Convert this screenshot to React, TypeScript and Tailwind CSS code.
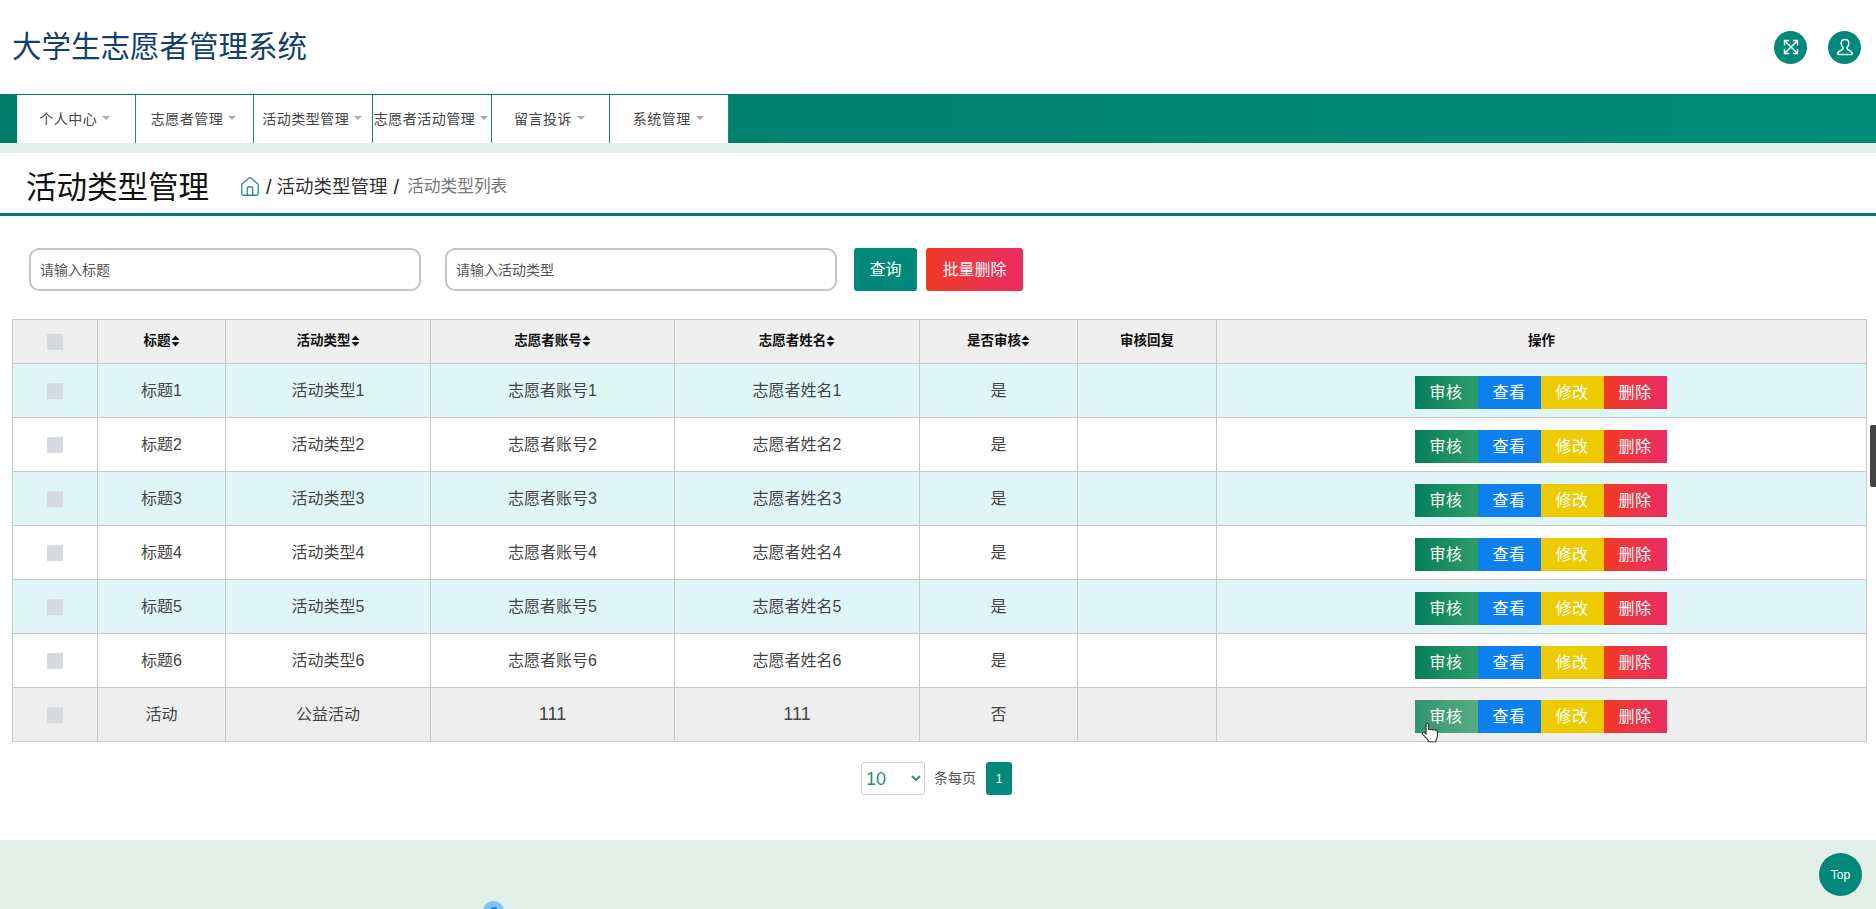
// 活动类型管理列表页
import { House } from 'lucide-react'

const navItems = ['个人中心', '志愿者管理', '活动类型管理', '志愿者活动管理', '留言投诉', '系统管理']

const columns = [
  { label: '标题', sort: true },
  { label: '活动类型', sort: true },
  { label: '志愿者账号', sort: true },
  { label: '志愿者姓名', sort: true },
  { label: '是否审核', sort: true },
  { label: '审核回复', sort: false },
  { label: '操作', sort: false },
]

const rows = [
  { title: '标题1', type: '活动类型1', account: '志愿者账号1', name: '志愿者姓名1', audit: '是', bg: 'bg-[#e0f6f6]' },
  { title: '标题2', type: '活动类型2', account: '志愿者账号2', name: '志愿者姓名2', audit: '是', bg: 'bg-white' },
  { title: '标题3', type: '活动类型3', account: '志愿者账号3', name: '志愿者姓名3', audit: '是', bg: 'bg-[#e0f6f6]' },
  { title: '标题4', type: '活动类型4', account: '志愿者账号4', name: '志愿者姓名4', audit: '是', bg: 'bg-white' },
  { title: '标题5', type: '活动类型5', account: '志愿者账号5', name: '志愿者姓名5', audit: '是', bg: 'bg-[#e0f6f6]' },
  { title: '标题6', type: '活动类型6', account: '志愿者账号6', name: '志愿者姓名6', audit: '是', bg: 'bg-white' },
  { title: '活动', type: '公益活动', account: '111', name: '111', audit: '否', bg: 'bg-[#eeeeee]', hover: true },
]

const cellClass = 'border border-[#c8c8c8] text-center align-middle'

function SortIcon() {
  return (
    <svg width="9" height="12" viewBox="0 0 9 12" className="inline-block align-[-2px]">
      <path d="M4.500 0.500 8.500 5.100H0.500Z" fill="#111" />
      <path d="M4.500 11.500 8.500 6.900H0.500Z" fill="#111" />
    </svg>
  )
}

function ExpandIcon() {
  return (
    <svg width="18" height="18" viewBox="0 0 20 20" fill="none" stroke="white" strokeWidth="1.600">
      <path d="M3 3 17 17M17 3 3 17" />
      <path d="M2.800 8V2.800H8M12 2.800h5.200V8M17.200 12v5.200H12M8 17.200H2.800V12" />
    </svg>
  )
}

function UserIcon() {
  return (
    <svg width="20" height="20" viewBox="0 0 20 20" fill="none" stroke="white" strokeWidth="1.500">
      <path d="M10 2.500c-2.400 0-3.800 1.800-3.800 4 0 1.700.7 3 1.700 3.800v1.200c0 .7-.5 1.100-1.300 1.500-1.600.7-3.400 1.500-3.900 3.200-.2.700.2 1.300 1 1.300h12.600c.8 0 1.200-.6 1-1.300-.5-1.700-2.300-2.500-3.900-3.200-.8-.4-1.300-.8-1.300-1.500v-1.200c1-.8 1.700-2.100 1.700-3.800 0-2.200-1.400-4-3.800-4Z" />
    </svg>
  )
}

function ActionButtons({ hover }: { hover?: boolean }) {
  return (
    <div className="mt-[4px] flex justify-center pr-[2px] text-[16px] tracking-[0.5px] text-white">
      <button
        className={
          hover
            ? 'h-[33px] w-[63px] bg-gradient-to-r from-[#2f9572] to-[#57ad80] pt-[1px]'
            : 'h-[33px] w-[63px] bg-gradient-to-r from-[#027f5b] to-[#2b9d69] pt-[1px]'
        }
      >
        审核
      </button>
      <button className="h-[33px] w-[63px] bg-[#0d80ee] pt-[1px]">查看</button>
      <button className="h-[33px] w-[63px] bg-[#eecb00] pt-[1px]">修改</button>
      <button className="h-[33px] w-[63px] bg-gradient-to-r from-[#f03a22] to-[#eb2c60] pt-[1px]">删除</button>
    </div>
  )
}

export default function App() {
  return (
    <div className="relative h-[909px] overflow-hidden bg-white font-['Liberation_Sans','Noto_Sans_CJK_SC',sans-serif] text-[#333]">
      {/* 顶部标题 */}
      <header className="flex h-[94px] items-center justify-between pl-[12px] pr-[15px]">
        <h1 className="text-[29.500px] font-normal leading-none text-[#12406e]">大学生志愿者管理系统</h1>
        <div className="flex gap-[21px]">
          <button className="flex h-[33px] w-[33px] items-center justify-center rounded-full bg-[#00897b]">
            <ExpandIcon />
          </button>
          <button className="flex h-[33px] w-[33px] items-center justify-center rounded-full bg-[#00897b]">
            <UserIcon />
          </button>
        </div>
      </header>

      {/* 导航 */}
      <nav className="flex h-[49px] bg-gradient-to-r from-[#007b69] to-[#008a78] pl-[17px] pt-[1px]">
        {navItems.map((item) => (
          <div
            key={item}
            className="flex h-[48px] w-[118.700px] items-center justify-center border-r border-[#1f8a7c] bg-white pr-[2px] text-[14px] tracking-[0.5px] whitespace-nowrap text-[#444]"
          >
            {item}
            <span className="ml-[5px] mb-[3px] h-0 w-0 border-x-[4px] border-t-[4px] border-x-transparent border-t-[#aaa]" />
          </div>
        ))}
      </nav>
      <div className="h-[10px] bg-[#e3efe9]" />

      {/* 面包屑 */}
      <div className="flex h-[63px] items-center border-b-[3px] border-[#007e6e] pl-[26px] pt-[8px]">
        <h2 className="text-[30.500px] font-normal leading-none text-[#111]">活动类型管理</h2>
        <House size={22} color="#2f8a80" strokeWidth={1.4} className="ml-[30px]" />
        <span className="mx-[5px] text-[20px] text-[#222]">/</span>
        <span className="text-[18.500px] text-[#333]">活动类型管理</span>
        <span className="ml-[6px] mr-[8px] text-[20px] text-[#222]">/</span>
        <span className="text-[16.700px] text-[#777]">活动类型列表</span>
      </div>

      {/* 搜索 */}
      <div className="flex items-center pl-[29px] pt-[32px]">
        <input
          placeholder="请输入标题"
          className="h-[43px] w-[392px] rounded-[10px] border-2 border-[#c4c4c4] pl-[9px] text-[14px] placeholder:text-[#555]"
        />
        <input
          placeholder="请输入活动类型"
          className="ml-[24px] h-[43px] w-[392px] rounded-[10px] border-2 border-[#c4c4c4] pl-[9px] text-[14px] placeholder:text-[#555]"
        />
        <button className="ml-[17px] h-[43px] w-[63px] rounded-[3px] bg-[#00897b] text-[16px] text-white">查询</button>
        <button className="ml-[9px] h-[43px] w-[97px] rounded-[3px] bg-gradient-to-r from-[#f03a22] to-[#eb2c60] text-[16px] text-white">
          批量删除
        </button>
      </div>

      {/* 列表 */}
      <div className="pl-[12px] pt-[28px]">
        <table className="w-[1855px] table-fixed border-collapse">
          <colgroup>
            <col className="w-[85px]" />
            <col className="w-[128px]" />
            <col className="w-[205px]" />
            <col className="w-[244px]" />
            <col className="w-[245px]" />
            <col className="w-[158px]" />
            <col className="w-[139px]" />
            <col />
          </colgroup>
          <thead>
            <tr className="h-[44px] bg-[#efefef]">
              <th className={cellClass}>
                <div className="mx-auto h-[16px] w-[16px] bg-[#d6dade]" />
              </th>
              {columns.map((col) => (
                <th key={col.label} className={`${cellClass} text-[13.500px] font-bold text-[#111]`}>
                  {col.label}
                  {col.sort && <SortIcon />}
                </th>
              ))}
            </tr>
          </thead>
          <tbody>
            {rows.map((row) => (
              <tr key={row.title} className={`h-[54px] text-[16px] text-[#444] ${row.bg}`}>
                <td className={cellClass}>
                  <div className="mx-auto h-[16px] w-[16px] bg-[#d6dade]" />
                </td>
                <td className={cellClass}>{row.title}</td>
                <td className={cellClass}>{row.type}</td>
                <td className={row.hover ? `${cellClass} text-[18px]` : cellClass}>{row.account}</td>
                <td className={row.hover ? `${cellClass} text-[18px]` : cellClass}>{row.name}</td>
                <td className={cellClass}>{row.audit}</td>
                <td className={cellClass} />
                <td className={cellClass}>
                  <ActionButtons hover={row.hover} />
                </td>
              </tr>
            ))}
          </tbody>
        </table>
      </div>

      {/* 分页 */}
      <div className="flex items-center justify-center pr-[3px] pt-[20px]">
        <select className="h-[33px] w-[64px] rounded-[3px] border border-[#cfcfcf] bg-white text-[18px] text-[#2e8f78]">
          <option>10</option>
        </select>
        <span className="ml-[9px] text-[14px] text-[#555]">条每页</span>
        <button className="ml-[10px] h-[33px] w-[26px] rounded-[3px] bg-[#00897b] text-[12px] text-white">1</button>
      </div>

      {/* 底部 */}
      <div className="relative mt-[45px] h-[69px] bg-[#e3efe9]">
        <div className="absolute left-[483px] top-[61px] flex h-[20px] w-[21px] items-center justify-center rounded-full bg-[#7cc4fa]">
          <div className="h-[8px] w-[8px] rounded-full bg-[#0a7fe0]" />
        </div>
      </div>

      <button className="absolute left-[1819px] top-[853px] h-[43px] w-[43px] rounded-full bg-[#00897b] text-[12px] text-white">
        Top
      </button>
      <div className="absolute right-0 top-[425px] h-[62px] w-[6px] rounded-l-[2px] bg-[#444]" />

      {/* 鼠标指针 */}
      <svg
        width="20"
        height="23"
        viewBox="0 0 18 24"
        preserveAspectRatio="none"
        className="absolute left-[1420px] top-[722px]"
      >
        <path
          d="M5.500 2.200c0-1.300 2.200-1.300 2.200 0v6c0-1 2-1 2 .1 0-1 2-1 2 .2 0-.9 2-.8 2 .3.1-.6 2-.4 2 .9v5c0 2-.7 3.200-1.300 4.300v1.700H7.400v-1.700c-1-1.300-2.500-3-5-6.300-.9-1.200.5-2.400 1.600-1.500l1.500 1.500V2.200Z"
          fill="white"
          stroke="#333"
          strokeWidth="1"
          strokeLinejoin="round"
        />
      </svg>
    </div>
  )
}
